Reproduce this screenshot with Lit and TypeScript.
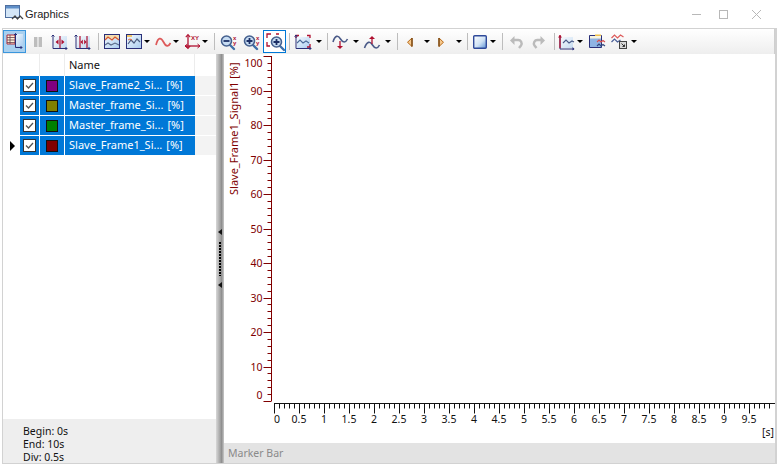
import { LitElement, html, css, svg } from "lit";
import { customElement } from "lit/decorators.js";

const NAVY = "#2a2f78";
const RED = "#b01030";

const axes = (ox: number, oy: number, r: number, t: number) => svg`<path d="M${ox} ${t}V${oy}H${r}" fill="none" stroke="${NAVY}"/><path d="M${ox - 1.5} ${t + 1.5}L${ox} ${t}l1.5 1.5M${r - 1.5} ${oy - 1.5}L${r} ${oy}l-1.5 1.5" fill="none" stroke="${NAVY}"/>`;
const defs = svg`<defs><linearGradient id="bl" x1="0" y1="0" x2="1" y2="1"><stop offset="0" stop-color="#f4f9fe"/><stop offset="1" stop-color="#a9cdf0"/></linearGradient></defs>`;
const lens = (sign: string) => svg`<path d="M9.5 10.5l4.5 4.5" stroke="#3f6fa8" stroke-width="2.4" stroke-linecap="round"/><circle cx="6.5" cy="7" r="5" fill="#c7dcf2" stroke="#45608f" stroke-width="1.6"/>${sign === "+" ? svg`<path d="M3.5 7h6M6.5 4v6" stroke="#1c2f66" stroke-width="1.8"/>` : svg`<path d="M3.5 7h6" stroke="#1c2f66" stroke-width="1.8"/>`}`;
const xy = svg`<text x="13" y="5.5" font-size="6" fill="${RED}" font-family="Liberation Sans" font-weight="700">x</text><text x="13" y="11" font-size="6" fill="${RED}" font-family="Liberation Sans" font-weight="700">y</text>`;

const ICONS: Record<string, any> = {
  view: svg`<path d="M9 1h8v12H9z" fill="url(#bl)"/><path d="M1 2h8v9H1z" fill="#fbf3d8" stroke="#b02a3c"/><path d="M1 4.500h8M1 7h8M1 9.500h8M4 2v9" stroke="#6b4050" stroke-width=".8"/>${axes(9.500, 14.500, 16, 0.500)}`,
  pause: svg`<path d="M2 2h3.4v10H2zM6.6 2h3.4v10H6.6z" fill="#bdbdbd"/>`,
  mark1: svg`<path d="M2 2h13v12H2z" fill="url(#bl)" opacity=".7"/><path d="M8 2v13" stroke="${RED}" stroke-width="1.2"/><path d="M6.5 5.5v5L3.5 8zM9.5 5.5v5l3 -2.5z" fill="${RED}"/>${axes(1, 14.5, 15, 1)}`,
  mark2: svg`<path d="M2 2h13v12H2z" fill="url(#bl)" opacity=".7"/><path d="M5 2v13M12 2v13" stroke="${RED}" stroke-width="1.2"/><path d="M7.8 5.5v5L5.5 8zM9.2 5.5v5l2.3 -2.5z" fill="${RED}"/>${axes(1, 14.5, 15, 1)}`,
  chart1: svg`<rect x=".5" y=".5" width="15" height="14" fill="url(#bl)" stroke="${NAVY}"/><path d="M1 1h14v3.5H1z" fill="#f3ddb0"/><path d="M1 6l3-3 4 3 3-3 4 3" fill="none" stroke="#d8552c" stroke-width="1.2"/><path d="M1 11l3-2 3 2 4-2 4 2" fill="none" stroke="#5a6a88" stroke-width="1.1"/>`,
  chart2: svg`<rect x=".5" y=".5" width="15" height="14" fill="url(#bl)" stroke="${NAVY}"/><path d="M1 1h5v2H1z" fill="#f1c66a"/><path d="M2 10l3-4 3 3 3-4 3 3" fill="none" stroke="#4a5c80" stroke-width="1.2"/><path d="M2 6l2-1 2 1" fill="none" stroke="#e06a45"/>`,
  wave: svg`<path d="M1 11C3 3 6 3 8.5 8s5 5 7 1" fill="none" stroke="#dd5a5a" stroke-width="1.7"/>`,
  axisxy: svg`<path d="M4 2v13" stroke="${RED}" stroke-width="1.3"/><path d="M1.8 4.2L4 1.5l2.2 2.7M1.8 12.8L4 15.5l2.2-2.7" fill="none" stroke="${RED}" stroke-width="1.1"/><path d="M1 13h15" stroke="${RED}" stroke-width="1.3"/><path d="M13.5 11l2.5 2-2.5 2M3.5 11L1 13l2.5 2" fill="none" stroke="${RED}"/><text x="7" y="7" font-size="6" fill="${RED}" font-family="Liberation Sans" font-weight="700">XY</text>`,
  zoomout: svg`${lens("-")}${xy}`,
  zoomin: svg`${lens("+")}${xy}`,
  zoomrect: svg`<path d="M1 5V1h4M10 1h3M1 9v4h3" fill="none" stroke="${RED}" stroke-width="1.3"/><g transform="translate(4 2)">${lens("+")}</g>`,
  fit: svg`<path d="M2 3h13v11H2z" fill="url(#bl)"/><path d="M2 9l3-3 3 3 3-2 3 2" fill="none" stroke="#4a6a98" stroke-width="1.1"/><path d="M1 4V1.500h3M12 1.500h3V4M15 10v3h-3" fill="none" stroke="${RED}" stroke-width="1.3"/>${axes(1, 14.5, 16, 1)}`,
  wavedown: svg`<path d="M1 8C3 1 6 1 8.5 5s5 4 7 0" fill="none" stroke="#4a5a88" stroke-width="1.6"/><path d="M8 7v6" stroke="${RED}" stroke-width="1.3"/><path d="M5 12h6l-3 3z" fill="${RED}"/>`,
  waveup: svg`<path d="M.5 14C3 7 6 7 8.5 11s5 4 7 0" fill="none" stroke="#4a5a88" stroke-width="1.6"/><path d="M8 4v6" stroke="${RED}" stroke-width="1.3"/><path d="M5 5h6l-3-3z" fill="${RED}"/>`,
  left: svg`<path d="M7 3v8.500L2.500 7.250z" fill="#f6c88c" stroke="#b86a18"/><path d="M7 3v8.500" stroke="#7a4a18" stroke-width="1.400"/>`,
  right: svg`<path d="M2 3v8.500l4.500-4.250z" fill="#f6c88c" stroke="#b86a18"/><path d="M2 3v8.500" stroke="#7a4a18" stroke-width="1.400"/>`,
  panel: svg`<defs><linearGradient id="pn" x1="0" y1="0" x2="1" y2="1"><stop offset="0" stop-color="#ffffff"/><stop offset=".55" stop-color="#cfe2f5"/><stop offset="1" stop-color="#5a90d4"/></linearGradient></defs><rect x=".7" y=".7" width="12.600" height="12.600" rx="1" fill="url(#pn)" stroke="#2f4a9a" stroke-width="1.400"/>`,
  undo: svg`<path d="M4 5h5a3.500 3.500 0 0 1 3 5.500L10 13" fill="none" stroke="#bbb" stroke-width="2.400"/><path d="M1 5.500L5.500 1v9z" fill="#bbb"/>`,
  redo: svg`<path d="M10 5H5.500a3.500 3.500 0 0 0-3 5.500L4.500 13" fill="none" stroke="#bbb" stroke-width="2.400"/><path d="M13 5.500L8.500 1v9z" fill="#bbb"/>`,
  yaxis: svg`<path d="M2 3h12v11H2z" fill="url(#bl)" opacity=".6"/><path d="M4 9l3-3 3 3 3-2 2 1" fill="none" stroke="#4a5a88" stroke-width="1.100"/><path d="M1 2v13h14" fill="none" stroke="${NAVY}"/><path d="M1 1v13" stroke="${RED}" stroke-width="1.300"/><path d="M-1 3.500L1 1l2 2.500" fill="${RED}"/><path d="M13.500 13l2 2-2 1.500" fill="${NAVY}"/>`,
  folder: svg`<path d="M.5 1.500h12v12H.5z" fill="#8fb4e4" stroke="${NAVY}"/><path d="M1 2h11v2.500H1z" fill="#f7f3e0"/><path d="M6 .5h6v1.500H6z" fill="#eec04a"/><path d="M8 8l2-2 2 2 2-1.500 2 1.500" fill="none" stroke="#d85050" stroke-width="1.200"/><path d="M8 12l2-2 2 2 2-1.500 2 1.500" fill="none" stroke="#354a80" stroke-width="1.200"/>`,
  exportw: svg`<path d="M.5 5l3-3 3 3 3-3 3 2" fill="none" stroke="#dd5a5a" stroke-width="1.200"/><path d="M.5 9l3-3 3 3 3-2" fill="none" stroke="#4a5f98" stroke-width="1.200"/><rect x="8.500" y="8.500" width="7" height="7" fill="#d8d8d8" stroke="#444"/><path d="M10.500 10.500l3 3M13.500 11.500v2h-2" fill="none" stroke="#333"/>`,
};

type Item = { k: "icon" | "sep" | "arrow"; x: number; n?: string; w?: number; h?: number; y?: number; sel?: number };
const T = (x: number, n: string, w = 16, h = 16): Item => ({ k: "icon", x, n, w, h });
const S = (x: number): Item => ({ k: "sep", x, w: 1 });
const A = (x: number): Item => ({ k: "arrow", x, w: 6 });
const ITEMS: Item[] = [
  { k: "icon", x: 3, n: "view", w: 23, h: 23, sel: 1 },
  T(32, "pause", 12, 14), T(52, "mark1"), T(75, "mark2"), S(98),
  T(104, "chart1"), T(126, "chart2"), A(144), T(155, "wave"), A(173), T(184, "axisxy", 17, 17), A(202), S(214),
  T(220, "zoomout"), T(243, "zoomin"),
  { k: "icon", x: 263, n: "zoomrect", w: 23, h: 23, sel: 2 }, S(289),
  T(295, "fit"), A(316), S(327), T(332, "wavedown"), A(353), T(364, "waveup"), A(385), S(397),
  T(405, "left", 9, 14), A(424), T(437, "right", 9, 14), A(456), S(467),
  T(473, "panel", 14, 14), A(490), S(502), T(509, "undo", 14, 14), T(532, "redo", 14, 14), S(554),
  T(559, "yaxis"), A(577), T(589, "folder", 17, 16), T(611, "exportw", 17, 17), A(631),
];

const ROWS = [
  { name: "Slave_Frame2_Si...", c: "#800080" },
  { name: "Master_frame_Si...", c: "#808000" },
  { name: "Master_frame_Si...", c: "#008000" },
  { name: "Slave_Frame1_Si...", c: "#800000", cur: true },
];

@customElement("app-root")
export class AppRoot extends LitElement {
  static styles = css`
    :host { display: block; width: 783px; height: 470px; background: #fff; overflow: hidden; font-family: "Noto Sans", "Liberation Sans", sans-serif; font-size: 11px; color: #111; }
    .title { height: 28px; display: flex; align-items: center; }
    .appicon { margin-left: 5px; width: 19px; height: 18px; }
    .title span { margin-left: 1px; font-family: "Liberation Sans", sans-serif; font-size: 11px; color: #222; }
    .ctrls { margin-left: auto; display: flex; align-items: center; margin-right: 22px; }
    .ctrls svg { width: 9px; height: 9px; display: block; }
    .ctrls .mx { margin-left: 18px; }
    .ctrls .cl { margin-left: 24px; }
    .frame { margin-left: 2px; width: 772px; height: 434px; border: 1px solid #d2d2d2; border-right-width: 2px; display: flex; flex-direction: column; }
    .tb { height: 25px; flex: none; display: flex; align-items: center; background: linear-gradient(#fff, #eeeeee); box-sizing: border-box; border-right: 1px solid #cfcfcf; }
    .btn { display: flex; align-items: center; justify-content: center; flex: none; box-sizing: border-box; }
    .btn svg { display: block; overflow: visible; }
    .s1 { background: #a9d0ef; border: 1px solid #3a96dd; }
    .s2 { background: #fff; border: 1px solid #0078d7; }
    .sep { width: 1px; height: 17px; background: #bdbdbd; flex: none; }
    .arr { width: 0; height: 0; border-style: solid; border-color: #000 transparent transparent; border-width: 3.500px 3px 0; flex: none; }
    .main { flex: 1; display: flex; min-height: 0; }
    .left { width: 213px; flex: none; display: flex; flex-direction: column; }
    .grid { flex: 1; }
    .hdr, .row { display: flex; }
    .hdr { height: 22px; }
    .hdr div { box-sizing: border-box; border-right: 1px solid #ececec; display: flex; align-items: center; }
    .c0 { width: 17px; flex: none; display: flex; align-items: center; justify-content: center; }
    .c1 { width: 20px; flex: none; border-right: 1px solid #fff; box-sizing: border-box; display: flex; align-items: center; justify-content: center; }
    .c2 { width: 25px; flex: none; border-right: 1px solid #fff; box-sizing: border-box; display: flex; align-items: center; justify-content: center; }
    .c3 { width: 130px; flex: none; box-sizing: border-box; padding: 0 0 2px 4px; display: flex; align-items: center; gap: 4px; white-space: nowrap; overflow: hidden; }
    .c4 { flex: 1; background: #f3f3f3; }
    .hdr .c0 { border-right: 0; }
    .hdr .c4 { background: #fff; border-right: 0; }
    .row { height: 19px; margin-bottom: 1px; }
    .row .c1, .row .c2, .row .c3 { background: #0078d7; color: #fff; }
    .check { width: 13px; height: 13px; background: #fff; border: 1px solid #333; box-sizing: border-box; display: block; }
    .swatch { width: 12px; height: 12px; border: 1px solid #111; box-sizing: border-box; }
    .cur { width: 0; height: 0; border: 5px solid transparent; border-left: 5px solid #000; border-right: 0; margin-left: 1px; }
    .info { height: 44px; flex: none; background: #eeeeee; padding: 6px 0 0 20px; box-sizing: border-box; line-height: 13px; font-size: 10.500px; }
    .split { width: 8px; flex: none; background: linear-gradient(90deg, #d8d8d8, #a0a0a0 55%, #8e8e8e 70%, #c8c8c8); display: flex; flex-direction: column; align-items: center; justify-content: center; }
    .tri { width: 0; height: 0; border: 3.500px solid transparent; border-right: 4px solid #111; border-left: 0; }
    .dots { width: 2px; height: 34px; margin: 7px 0 6px; background: repeating-linear-gradient(#000 0 2px, transparent 2px 3px); }
    .right { flex: 1; display: flex; flex-direction: column; min-width: 0; }
    .plot { flex: 1; display: block; width: 100%; }
    .marker { height: 20px; flex: none; background: #e3e3e3; color: #8a8a8a; font-size: 10.500px; padding-left: 4px; display: flex; align-items: center; }
    .ytxt { font-family: "Noto Sans", sans-serif; font-size: 10.500px; fill: #800000; }
    .ylab { font-family: "Noto Sans", sans-serif; font-size: 11px; fill: #800000; }
    .xtxt { font-family: "Noto Sans", sans-serif; font-size: 10.500px; fill: #111; }
  `;

  toolbar() {
    let end = 3;
    return ITEMS.map((it) => {
      const m = it.x - end;
      end = it.x + (it.w ?? 0);
      const st = `margin-left:${m}px`;
      if (it.k === "sep") return html`<div class="sep" style=${st}></div>`;
      if (it.k === "arrow") return html`<div class="arr" style=${st}></div>`;
      const sel = it.sel;
      const size = sel ? 17 : it.w!;
      const hh = sel ? 17 : it.h!;
      return html`<div class="btn ${sel === 1 ? "s1" : sel === 2 ? "s2" : ""}" style="${st};width:${it.w}px;height:${it.h}px">
        <svg width=${size} height=${hh} viewBox="0 0 ${size} ${hh}">${defs}${ICONS[it.n!]}</svg></div>`;
    });
  }

  plot() {
    // coordinates below are relative to the plot box, which starts at (224, 54)
    const ox = 224, oy = 54;
    const ax = 271.500 - ox;
    const y0 = 401, per10 = 34.500;
    const yt = [];
    for (let i = 0; i <= 50; i++) {
      const y = y0 - i * per10 / 5 - oy;
      const major = i % 5 === 0;
      yt.push(svg`<path d="M${ax - (major ? 8 : 4)} ${Math.round(y) + .5}H${ax}" stroke="#800000"/>`);
    }
    const ylabels = [];
    for (let v = 0; v <= 100; v += 10) {
      let y = y0 - (v / 10) * per10 - oy;
      if (v === 0) y -= 6;
      if (v === 100) y += 7;
      ylabels.push(svg`<text class="ytxt" x=${ax - 9} y=${y + 4} text-anchor="end">${v}</text>`);
    }
    const xl = 403.500 - oy;
    const xt = [];
    for (let i = 0; i < 100; i++) {
      const x = Math.round(274 + i * 5) - ox + .5;
      xt.push(svg`<path d="M${x} ${xl}v${i % 5 === 0 ? 10 : 5}" stroke="#111"/>`);
    }
    const xlabels = [];
    for (let i = 0; i < 20; i++) {
      const v = i / 2;
      xlabels.push(svg`<text class="xtxt" x=${274 + i * 25 - ox + (i === 0 ? 3 : 0)} y=${423 - oy} text-anchor="middle">${v}</text>`);
    }
    return svg`
      <path d="M${ax} ${56 - oy}V${y0 - oy}" stroke="#800000"/>
      ${yt}${ylabels}
      <text class="ylab" transform="translate(${238 - ox} ${195 - oy}) rotate(-90)">Slave_Frame1_Signal1 [%]</text>
      <path d="M${274 - ox} ${xl}H${775 - ox}" stroke="#111"/>
      ${xt}${xlabels}
      <text class="xtxt" x=${774 - ox} y=${436 - oy} text-anchor="end">[s]</text>`;
  }

  render() {
    return html`
      <div class="title">
        <svg class="appicon" viewBox="0 0 19 18"><rect x=".5" y=".5" width="14" height="12" fill="#d4e6f7" stroke="#4f6f9f"/><path d="M1 1h13v2.500H1z" fill="#5f8fc8"/><path d="M7 14l3-3 2.500 3 2.500-3 3 3" fill="none" stroke="#444" stroke-width="1.200"/></svg>
        <span>Graphics</span>
        <div class="ctrls">
          <svg viewBox="0 0 9 9"><path d="M0 4.500h9" stroke="#b8b8b8"/></svg>
          <svg class="mx" viewBox="0 0 9 9"><rect x=".5" y=".5" width="8" height="8" fill="none" stroke="#b8b8b8"/></svg>
          <svg class="cl" viewBox="0 0 9 9"><path d="M0 0l9 9M9 0L0 9" stroke="#b8b8b8"/></svg>
        </div>
      </div>
      <div class="frame">
        <div class="tb">${this.toolbar()}</div>
        <div class="main">
          <div class="left">
            <div class="grid">
              <div class="hdr"><div class="c0"></div><div class="c1"></div><div class="c2"></div><div class="c3">Name</div><div class="c4"></div></div>
              ${ROWS.map((r) => html`<div class="row">
                <div class="c0">${r.cur ? html`<div class="cur"></div>` : ""}</div>
                <div class="c1"><svg class="check" viewBox="0 0 11 11"><path d="M2 5.500l2.500 2.500 4.500-5" fill="none" stroke="#555" stroke-width="1.300"/></svg></div>
                <div class="c2"><div class="swatch" style="background:${r.c}"></div></div>
                <div class="c3"><span>${r.name}</span><span>[%]</span></div>
                <div class="c4"></div>
              </div>`)}
            </div>
            <div class="info"><div>Begin: 0s</div><div>End: 10s</div><div>Div: 0.5s</div></div>
          </div>
          <div class="split"><div class="tri"></div><div class="dots"></div><div class="tri"></div></div>
          <div class="right">
            <svg class="plot">${this.plot()}</svg>
            <div class="marker">Marker Bar</div>
          </div>
        </div>
      </div>`;
  }
}
